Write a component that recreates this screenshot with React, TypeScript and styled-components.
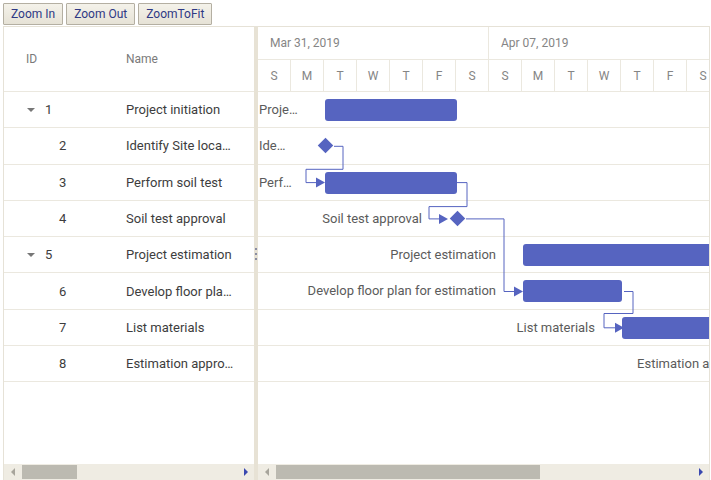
import React from 'react';
import styled, { createGlobalStyle } from 'styled-components';

const GlobalStyle = createGlobalStyle`
  html, body {
    margin: 0;
    padding: 0;
    background: #ffffff;
  }
  body {
    font-family: Roboto, 'Liberation Sans', Arial, sans-serif;
  }
`;

const DAY = 33;
const ROW = 36.3;
const BAR_COLOR = '#5664c0';
const LINE = '#ebe8df';

type Task = {
  id: number;
  name: string;
  parent?: boolean;
  start: number;
  days: number;
};

const tasks: Task[] = [
  { id: 1, name: 'Project initiation', parent: true, start: 2, days: 4 },
  { id: 2, name: 'Identify Site location', start: 2, days: 0 },
  { id: 3, name: 'Perform soil test', start: 2, days: 4 },
  { id: 4, name: 'Soil test approval', start: 6, days: 0 },
  { id: 5, name: 'Project estimation', parent: true, start: 8, days: 8 },
  { id: 6, name: 'Develop floor plan for estimation', start: 8, days: 3 },
  { id: 7, name: 'List materials', start: 11, days: 3 },
  { id: 8, name: 'Estimation approval', start: 16, days: 0 },
];

const days = ['S', 'M', 'T', 'W', 'T', 'F', 'S', 'S', 'M', 'T', 'W', 'T', 'F', 'S'];

const Page = styled.div`
  height: 480px;
  display: flex;
  flex-direction: column;
  overflow: hidden;
`;

const Toolbar = styled.div`
  display: flex;
  gap: 3px;
  padding: 3px 0 1px 3px;
  height: 22px;
`;

const ToolButton = styled.button`
  height: 22px;
  padding: 0 7px;
  background: linear-gradient(#f4f2ea, #e6e2d6);
  border: 1px solid #b4afa2;
  border-radius: 1px;
  font-family: Roboto, 'Liberation Sans', Arial, sans-serif;
  font-size: 12px;
  color: #2f3984;
  cursor: pointer;
`;

const Gantt = styled.div`
  flex: 1;
  min-height: 0;
  display: flex;
  margin: 0 1px 0 3px;
  border: 1px solid #e6e2d7;
  border-bottom: none;
`;

const GridPane = styled.div`
  width: 250px;
  display: flex;
  flex-direction: column;
`;

const GridHeader = styled.div`
  height: 64px;
  flex-shrink: 0;
  display: flex;
  align-items: center;
  border-bottom: 1px solid ${LINE};
  font-size: 12px;
  color: #7a7a7a;
`;

const IdCol = styled.div`
  width: 100px;
  padding-left: 22px;
  box-sizing: border-box;
  display: flex;
  align-items: center;
`;

const NameCol = styled.div`
  width: 150px;
  padding: 0 20px 0 22px;
  box-sizing: border-box;
  white-space: nowrap;
  overflow: hidden;
  text-overflow: ellipsis;
`;

const GridBody = styled.div`
  flex: 1;
  overflow: hidden;
`;

const GridRow = styled.div`
  height: ${ROW}px;
  box-sizing: border-box;
  display: flex;
  align-items: center;
  border-bottom: 1px solid ${LINE};
  font-size: 13px;
  color: #3d3d3d;
`;

const Caret = styled.span`
  width: 0;
  height: 0;
  margin: 0 10px 0 1px;
  border-left: 4px solid transparent;
  border-right: 4px solid transparent;
  border-top: 4px solid #777;
`;

const ChildId = styled.span`
  padding-left: 33px;
`;

const Splitter = styled.div`
  width: 4px;
  background: #e7e2d5;
  display: flex;
  align-items: center;
  justify-content: center;
`;

const SplitDots = styled.div`
  display: flex;
  flex-direction: column;
  gap: 3px;
`;

const Dot = styled.span`
  width: 2px;
  height: 2px;
  border-radius: 1px;
  background: #6b7090;
`;

const ChartPane = styled.div`
  flex: 1;
  min-width: 0;
  display: flex;
  flex-direction: column;
  overflow: hidden;
`;

const Timeline = styled.div`
  height: 65px;
  flex-shrink: 0;
  display: flex;
  flex-direction: column;
  border-bottom: 1px solid ${LINE};
  box-sizing: border-box;
  color: #858585;
  font-size: 12px;
`;

const TierRow = styled.div<{ $h: number }>`
  height: ${(p) => p.$h}px;
  display: flex;
  flex-shrink: 0;
  & + & {
    border-top: 1px solid ${LINE};
  }
`;

const WeekCell = styled.div`
  width: ${DAY * 7}px;
  flex-shrink: 0;
  padding-left: 12px;
  box-sizing: border-box;
  display: flex;
  align-items: center;
  border-right: 1px solid ${LINE};
`;

const DayCell = styled.div`
  width: ${DAY}px;
  flex-shrink: 0;
  box-sizing: border-box;
  display: flex;
  align-items: center;
  justify-content: center;
  border-right: 1px solid ${LINE};
`;

const ChartBody = styled.div`
  flex: 1;
  position: relative;
  overflow: hidden;
`;

const ChartRow = styled.div`
  height: ${ROW}px;
  box-sizing: border-box;
  position: relative;
  border-bottom: 1px solid ${LINE};
  width: 1000px;
`;

const Bar = styled.div`
  position: absolute;
  top: 7px;
  height: 22px;
  background: ${BAR_COLOR};
  border-radius: 3px;
`;

const Milestone = styled.div`
  position: absolute;
  top: 12px;
  width: 11px;
  height: 11px;
  background: ${BAR_COLOR};
  transform: rotate(45deg);
`;

const BarLabel = styled.div`
  position: absolute;
  left: 1px;
  top: 0;
  height: ${ROW - 1}px;
  line-height: ${ROW - 1}px;
  text-align: right;
  font-size: 13px;
  color: #5b5b5b;
  white-space: nowrap;
  overflow: hidden;
  text-overflow: ellipsis;
`;

const Connectors = styled.svg`
  position: absolute;
  left: 0;
  top: 0;
  pointer-events: none;
`;

const ScrollTrack = styled.div`
  height: 16px;
  flex-shrink: 0;
  display: flex;
  align-items: center;
  background: #efece3;
  padding: 0 6px 0 7px;
  gap: 4px;
`;

const Arrow = styled.span<{ $dir: 'left' | 'right'; $active?: boolean }>`
  width: 0;
  height: 0;
  border-top: 4px solid transparent;
  border-bottom: 4px solid transparent;
  ${(p) =>
    p.$dir === 'left'
      ? `border-right: 4px solid ${p.$active ? '#3a48b0' : '#a8a59c'};`
      : `border-left: 4px solid ${p.$active ? '#3a48b0' : '#a8a59c'};`}
`;

const Thumb = styled.div<{ $w: number }>`
  width: ${(p) => p.$w}px;
  height: 14px;
  background: #bcbab1;
  margin-left: 3px;
`;

const Spacer = styled.div`
  flex: 1;
`;

function ScrollBar({ thumb }: { thumb: number }) {
  return (
    <ScrollTrack>
      <Arrow $dir="left" />
      <Thumb $w={thumb} />
      <Spacer />
      <Arrow $dir="right" $active />
    </ScrollTrack>
  );
}

const GAP = 27;

function TaskBar({ task }: { task: Task }) {
  const isMilestone = task.days === 0;
  const left = isMilestone ? task.start * DAY - 7 : task.start * DAY + 1;
  const labelWidth = Math.max(left - GAP - 1, 10);
  return (
    <ChartRow>
      <BarLabel style={{ width: labelWidth }}>{task.name}</BarLabel>
      {isMilestone ? (
        <Milestone style={{ left: task.start * DAY - 4.5 }} />
      ) : (
        <Bar style={{ left, width: task.days * DAY }} />
      )}
    </ChartRow>
  );
}

const c = (r: number) => r * ROW + 18;

const links: number[][][] = [
  // identify site location -> perform soil test
  [[76, c(1)], [85, c(1)], [85, c(1) + 23], [48, c(1) + 23], [48, c(2)], [58, c(2)]],
  // perform soil test -> soil test approval
  [[199, c(2)], [209, c(2)], [209, c(2) + 24], [171, c(2) + 24], [171, c(3)], [181, c(3)]],
  // soil test approval -> develop floor plan
  [[208, c(3)], [246, c(3)], [246, c(5)], [256, c(5)]],
  // develop floor plan -> list materials
  [[366, c(5)], [375, c(5)], [375, c(5) + 22], [346, c(5) + 22], [346, c(6)], [357, c(6)]],
];

export default function App() {
  return (
    <>
      <GlobalStyle />
      <Page>
        <Toolbar>
          <ToolButton>Zoom In</ToolButton>
          <ToolButton>Zoom Out</ToolButton>
          <ToolButton>ZoomToFit</ToolButton>
        </Toolbar>
        <Gantt>
          <GridPane>
            <GridHeader>
              <IdCol>ID</IdCol>
              <NameCol>Name</NameCol>
            </GridHeader>
            <GridBody>
              {tasks.map((t) => (
                <GridRow key={t.id}>
                  <IdCol>
                    {t.parent ? (
                      <>
                        <Caret />
                        {t.id}
                      </>
                    ) : (
                      <ChildId>{t.id}</ChildId>
                    )}
                  </IdCol>
                  <NameCol>{t.name}</NameCol>
                </GridRow>
              ))}
            </GridBody>
            <ScrollBar thumb={55} />
          </GridPane>
          <Splitter>
            <SplitDots>
              <Dot />
              <Dot />
              <Dot />
            </SplitDots>
          </Splitter>
          <ChartPane>
            <Timeline>
              <TierRow $h={32}>
                <WeekCell>Mar 31, 2019</WeekCell>
                <WeekCell>Apr 07, 2019</WeekCell>
              </TierRow>
              <TierRow $h={32}>
                {days.map((d, i) => (
                  <DayCell key={i}>{d}</DayCell>
                ))}
              </TierRow>
            </Timeline>
            <ChartBody>
              {tasks.map((t) => (
                <TaskBar key={t.id} task={t} />
              ))}
              <Connectors width={1000} height={400}>
                {links.map((pts, i) => {
                  const last = pts[pts.length - 1];
                  return (
                    <g key={i}>
                      <polyline
                        points={pts.map((p) => p.join(',')).join(' ')}
                        fill="none"
                        stroke={BAR_COLOR}
                        strokeWidth={1}
                      />
                      <polygon
                        points={`${last[0]},${last[1] - 5} ${last[0] + 9},${last[1]} ${last[0]},${last[1] + 5}`}
                        fill={BAR_COLOR}
                      />
                    </g>
                  );
                })}
              </Connectors>
            </ChartBody>
            <ScrollBar thumb={264} />
          </ChartPane>
        </Gantt>
      </Page>
    </>
  );
}
